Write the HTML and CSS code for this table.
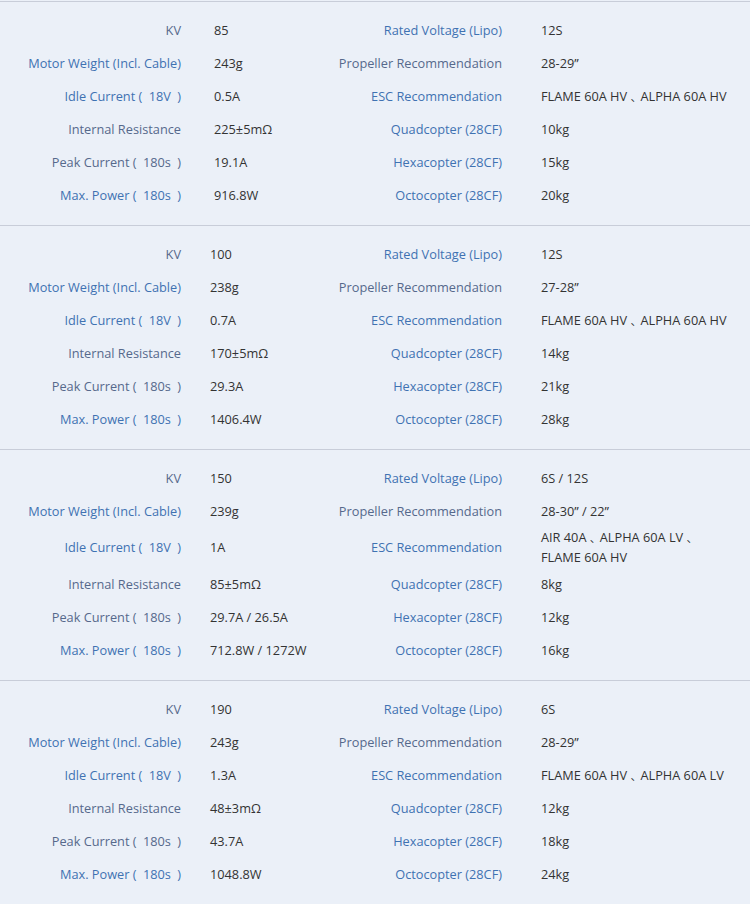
FILE: index.html
```html
<!DOCTYPE html>
<html>
<head>
<meta charset="utf-8">
<link rel="stylesheet" href="styles.css">
</head>
<body>
<div class="page">
  <section class="spec first">
    <div class="lab">KV</div><div class="val">85</div><div class="lab2 blue">Rated Voltage (Lipo)</div><div class="val2">12S</div>
    <div class="lab blue">Motor Weight (Incl. Cable)</div><div class="val">243g</div><div class="lab2">Propeller Recommendation</div><div class="val2">28-29”</div>
    <div class="lab blue">Idle Current (&ensp;18V&ensp;)</div><div class="val">0.5A</div><div class="lab2 blue">ESC Recommendation</div><div class="val2">FLAME 60A HV <span class="sep">、</span>ALPHA 60A HV</div>
    <div class="lab">Internal Resistance</div><div class="val">225±5mΩ</div><div class="lab2 blue">Quadcopter (28CF)</div><div class="val2">10kg</div>
    <div class="lab">Peak Current (&ensp;180s&ensp;)</div><div class="val">19.1A</div><div class="lab2 blue">Hexacopter (28CF)</div><div class="val2">15kg</div>
    <div class="lab blue">Max. Power (&ensp;180s&ensp;)</div><div class="val">916.8W</div><div class="lab2 blue">Octocopter (28CF)</div><div class="val2">20kg</div>
  </section>
  <section class="spec">
    <div class="lab">KV</div><div class="val">100</div><div class="lab2 blue">Rated Voltage (Lipo)</div><div class="val2">12S</div>
    <div class="lab blue">Motor Weight (Incl. Cable)</div><div class="val">238g</div><div class="lab2">Propeller Recommendation</div><div class="val2">27-28”</div>
    <div class="lab blue">Idle Current (&ensp;18V&ensp;)</div><div class="val">0.7A</div><div class="lab2 blue">ESC Recommendation</div><div class="val2">FLAME 60A HV <span class="sep">、</span>ALPHA 60A HV</div>
    <div class="lab">Internal Resistance</div><div class="val">170±5mΩ</div><div class="lab2 blue">Quadcopter (28CF)</div><div class="val2">14kg</div>
    <div class="lab">Peak Current (&ensp;180s&ensp;)</div><div class="val">29.3A</div><div class="lab2 blue">Hexacopter (28CF)</div><div class="val2">21kg</div>
    <div class="lab blue">Max. Power (&ensp;180s&ensp;)</div><div class="val">1406.4W</div><div class="lab2 blue">Octocopter (28CF)</div><div class="val2">28kg</div>
  </section>
  <section class="spec">
    <div class="lab">KV</div><div class="val">150</div><div class="lab2 blue">Rated Voltage (Lipo)</div><div class="val2">6S / 12S</div>
    <div class="lab blue">Motor Weight (Incl. Cable)</div><div class="val">239g</div><div class="lab2">Propeller Recommendation</div><div class="val2">28-30” / 22”</div>
    <div class="lab blue">Idle Current (&ensp;18V&ensp;)</div><div class="val">1A</div><div class="lab2 blue">ESC Recommendation</div><div class="val2">AIR 40A <span class="sep">、</span>ALPHA 60A LV <span class="sep">、</span><br>FLAME 60A HV</div>
    <div class="lab">Internal Resistance</div><div class="val">85±5mΩ</div><div class="lab2 blue">Quadcopter (28CF)</div><div class="val2">8kg</div>
    <div class="lab">Peak Current (&ensp;180s&ensp;)</div><div class="val">29.7A / 26.5A</div><div class="lab2 blue">Hexacopter (28CF)</div><div class="val2">12kg</div>
    <div class="lab blue">Max. Power (&ensp;180s&ensp;)</div><div class="val">712.8W / 1272W</div><div class="lab2 blue">Octocopter (28CF)</div><div class="val2">16kg</div>
  </section>
  <section class="spec">
    <div class="lab">KV</div><div class="val">190</div><div class="lab2 blue">Rated Voltage (Lipo)</div><div class="val2">6S</div>
    <div class="lab blue">Motor Weight (Incl. Cable)</div><div class="val">243g</div><div class="lab2">Propeller Recommendation</div><div class="val2">28-29”</div>
    <div class="lab blue">Idle Current (&ensp;18V&ensp;)</div><div class="val">1.3A</div><div class="lab2 blue">ESC Recommendation</div><div class="val2">FLAME 60A HV <span class="sep">、</span>ALPHA 60A LV</div>
    <div class="lab">Internal Resistance</div><div class="val">48±3mΩ</div><div class="lab2 blue">Quadcopter (28CF)</div><div class="val2">12kg</div>
    <div class="lab">Peak Current (&ensp;180s&ensp;)</div><div class="val">43.7A</div><div class="lab2 blue">Hexacopter (28CF)</div><div class="val2">18kg</div>
    <div class="lab blue">Max. Power (&ensp;180s&ensp;)</div><div class="val">1048.8W</div><div class="lab2 blue">Octocopter (28CF)</div><div class="val2">24kg</div>
  </section>
</div>
</body>
</html>
```

FILE: styles.css
```css
html, body {
  margin: 0;
  padding: 0;
  background: #ebf0f8;
}
.page {
  padding-top: 1px;
  font-family: "Open Sans", "Noto Sans CJK SC", sans-serif;
  font-size: 12.75px;
  line-height: 20px;
}
.spec {
  border-top: 1px solid #c8cdd9;
  padding: 11px 0 14px;
  display: grid;
  grid-template-columns: 181px 150px 171px 1fr;
  grid-auto-rows: minmax(33px, auto);
  align-items: center;
}
.lab, .lab2 {
  text-align: right;
  color: #56698c;
  white-space: nowrap;
}
.blue {
  color: #3f72b2;
}
.val {
  padding-left: 29px;
  color: #333;
  white-space: nowrap;
}
.first .val {
  padding-left: 33px;
}
.val2 {
  padding-left: 39px;
  color: #333;
  white-space: nowrap;
}
.sep {
  font-size: 11px;
  line-height: 0;
  margin-right: -1px;
}
```
